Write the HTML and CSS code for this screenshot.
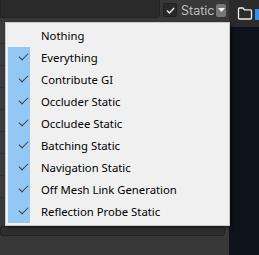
FILE: index.html
```html
<!DOCTYPE html>
<html lang="en">
<head>
    <meta charset="UTF-8">
    <title>Static flags</title>
    <link rel="stylesheet" href="styles.css">
</head>
<body>
    <div class="editor">
        <div class="inspector">
            <div class="header">
                <div class="name-field"></div>
                <div class="static-toggle">
                    <span class="checkbox">
                        <svg width="11" height="11" viewBox="0 0 11 11"><path d="M2 5.5 L4.5 8 L9 3" fill="none" stroke="#e8e8e8" stroke-width="1.5"/></svg>
                    </span>
                    <span class="static-label">Static</span>
                    <span class="arrow-btn">
                        <svg width="9" height="6" viewBox="0 0 9 6"><path d="M1 1 L8 1 L4.5 5 Z" fill="#f2f2f2"/></svg>
                    </span>
                </div>
            </div>
            <div class="rows">
                <div class="row"></div>
                <div class="row"></div>
                <div class="row"></div>
                <div class="row"></div>
                <div class="row"></div>
                <div class="row"></div>
                <div class="row"></div>
                <div class="row"></div>
                <div class="row count-row">
                    <div class="num-field">1</div>
                </div>
                <div class="row last-row">
                    <div class="wide-field"></div>
                </div>
            </div>

            <!-- popup menu -->
            <div class="flag-menu">
                <div class="check-strip"></div>
                <div class="item">Nothing</div>
                <div class="item checked">Everything</div>
                <div class="item checked">Contribute GI</div>
                <div class="item checked">Occluder Static</div>
                <div class="item checked">Occludee Static</div>
                <div class="item checked">Batching Static</div>
                <div class="item checked">Navigation Static</div>
                <div class="item checked">Off Mesh Link Generation</div>
                <div class="item checked">Reflection Probe Static</div>
            </div>
        </div>

        <div class="side">
            <div class="side-bar">
                <svg width="16" height="13" viewBox="0 0 16 13"><path d="M1.5 2 Q1.5 1 2.5 1 L6 1 L7.5 2.8 L13.5 2.8 Q14.5 2.8 14.5 3.8 L14.5 11 Q14.5 12 13.5 12 L2.5 12 Q1.5 12 1.5 11 Z" fill="none" stroke="#f0f0f0" stroke-width="1.3"/></svg>
                <span class="side-blue"></span>
            </div>
            <div class="side-view"></div>
        </div>
    </div>
</body>
</html>
```

FILE: styles.css
```css
* {
    margin: 0;
    padding: 0;
    box-sizing: border-box;
}

body {
    background: #383838;
    font-family: 'Noto Sans', 'Open Sans', sans-serif;
    width: 259px;
    height: 255px;
    overflow: hidden;
}

.editor {
    display: grid;
    grid-template-columns: 229px 30px;
    height: 255px;
}

.inspector {
    position: relative;
    background: #383838;
    display: flex;
    flex-direction: column;
}

.header {
    height: 22px;
    display: flex;
    align-items: flex-start;
    gap: 3px;
}

.name-field {
    width: 160px;
    height: 19px;
    margin-top: -1px;
    background: #2a2a2a;
    border: 1px solid #212121;
    border-radius: 0 0 3px 0;
}

.static-toggle {
    display: flex;
    align-items: center;
    height: 22px;
    padding-bottom: 2px;
}

.checkbox {
    width: 14px;
    height: 14px;
    background: #2a2a2a;
    border: 1px solid #1f1f1f;
    border-radius: 2px;
    display: flex;
    align-items: center;
    justify-content: center;
}

.static-label {
    margin-left: 4px;
    color: #bdbdbd;
    font-size: 12.5px;
    font-family: Inter, 'Noto Sans', sans-serif;
}

.arrow-btn {
    width: 10px;
    height: 13px;
    margin-left: 2px;
    background: #767676;
    border-radius: 2px;
    display: flex;
    align-items: center;
    justify-content: center;
}

.rows {
    flex: 1;
    display: flex;
    flex-direction: column;
}

.row {
    height: 22px;
    border-bottom: 1px solid #303030;
    background: #3c3c3c;
}

.count-row {
    height: 28px;
    background: #383838;
    border: none;
    display: flex;
    justify-content: flex-end;
    padding: 3px 4px 0 0;
}

.num-field {
    width: 47px;
    height: 23px;
    background: #2a2a2a;
    border: 1px solid #222;
    border-radius: 3px;
    color: #c8c8c8;
    font-family: Inter, 'Noto Sans', sans-serif;
    font-size: 13px;
    padding: 2px 0 0 5px;
}

.last-row {
    flex: 1;
    background: #383838;
    border: none;
    padding: 0 4px 0 0;
}

.wide-field {
    height: 10px;
    border: 1px solid #222;
    border-radius: 3px;
    background: #2e2e2e;
}

.flag-menu {
    position: absolute;
    left: 5px;
    top: 22px;
    width: 225px;
    height: 204px;
    background: #f0f0f0;
    border: 1px solid #c9c9c9;
    padding: 1px 2px 3px 2px;
    box-shadow: 2px 2px 3px rgba(0,0,0,0.45);
}

.check-strip {
    position: absolute;
    left: 2px;
    top: 24px;
    width: 22px;
    height: 176px;
    background: #93c8f5;
}

.item {
    position: relative;
    height: 22px;
    line-height: 23px;
    padding-left: 33px;
    font-size: 11.3px;
    color: #000;
}

.item.checked::before {
    content: "";
    position: absolute;
    left: 11px;
    top: 7px;
    width: 8px;
    height: 4px;
    border-left: 1.6px solid #3d3d3d;
    border-bottom: 1.6px solid #3d3d3d;
    transform: rotate(-45deg);
}

.side {
    display: flex;
    flex-direction: column;
}

.side-bar {
    height: 27px;
    background: #2b2b2b;
    display: flex;
    align-items: center;
    gap: 2px;
    padding-left: 8px;
}

.side-blue {
    width: 4px;
    height: 11px;
    background: #3a8ee6;
    margin-top: 2px;
}

.side-view {
    flex: 1;
    background: #0e121a;
}
```
